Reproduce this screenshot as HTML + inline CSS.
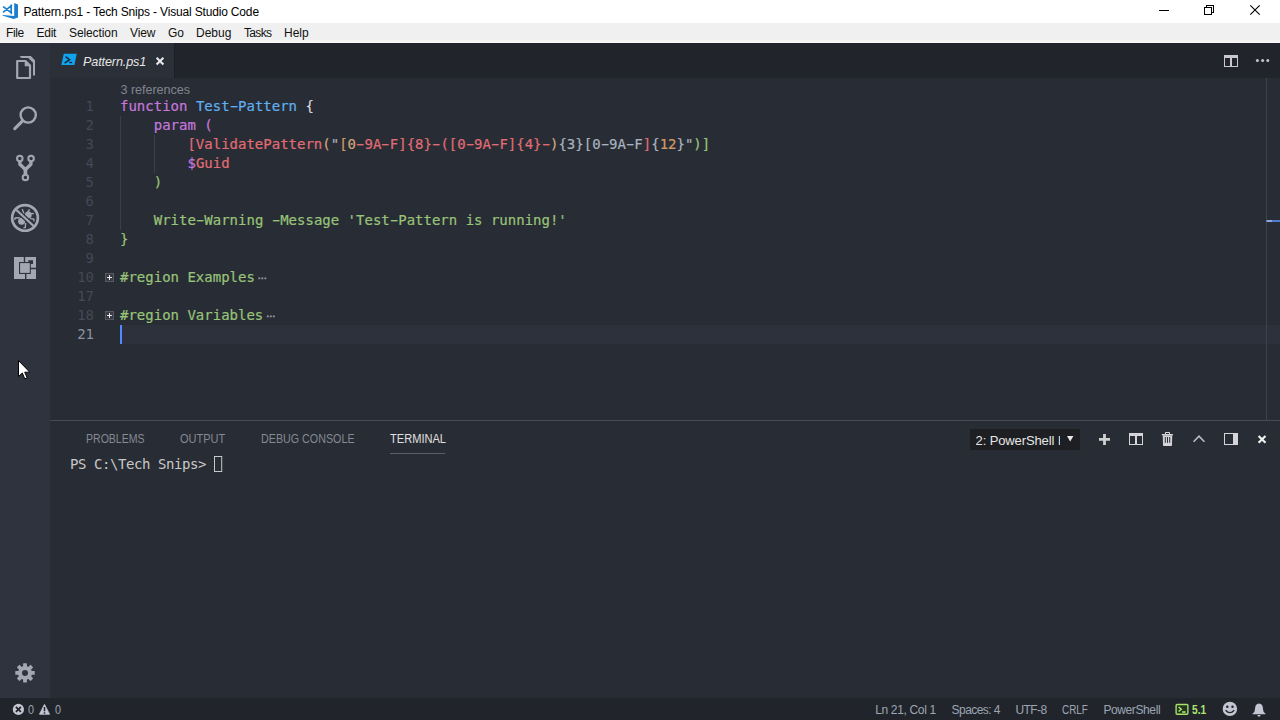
<!DOCTYPE html>
<html lang="en">
<head>
<meta charset="utf-8">
<title>Pattern.ps1 - Tech Snips - Visual Studio Code</title>
<style>
*{box-sizing:border-box;margin:0;padding:0}
html,body{width:1280px;height:720px;overflow:hidden;background:#282c34}
body{position:relative;font-family:"Liberation Sans",sans-serif;font-size:12px;color:#abb2bf}
.abs{position:absolute}
#titlebar{left:0;top:0;width:1280px;height:23px;background:#fff;color:#000}
#title{left:23.5px;top:0;height:23px;line-height:25px;font-size:12px;white-space:nowrap;letter-spacing:-0.17px}
#menubar{left:0;top:23px;width:1280px;height:20px;background:#f0f0f0;color:#111}
#menubar span{position:absolute;top:0;height:20px;line-height:21px;font-size:12px;white-space:nowrap}
#activity{left:0;top:43px;width:50px;height:655px;background:#2f333d}
#tabs{left:50px;top:43px;width:1230px;height:35px;background:#21252b}
#tab{left:0;top:0;width:125px;height:35px;background:#2b2f38;border-right:1px solid #1c1f25}
#tabname{left:33px;top:0;height:35px;line-height:38px;font-size:12.6px;letter-spacing:-0.12px;font-style:italic;color:#e6e6e6;white-space:nowrap}
#editor{left:50px;top:78px;width:1230px;height:342px;background:#282c34;overflow:hidden}
.ln{position:absolute;left:0;width:44px;text-align:right;height:19px;line-height:19px;font-family:"DejaVu Sans Mono","Liberation Mono",monospace;font-size:14px;color:#434956}
.cl{position:absolute;left:70px;height:19px;line-height:19px;font-family:"DejaVu Sans Mono","Liberation Mono",monospace;font-size:14px;white-space:pre;color:#abb2bf;-webkit-text-stroke:0.2px currentColor}
.p{color:#c678dd}.b{color:#61afef}.r{color:#e06c75}.g{color:#98c379}.o{color:#d19a66}.w{color:#abb2bf}.y{color:#d4d7dd}.t{color:#cfa77e}
.cur{color:#8b929f}
.el{display:inline-block;width:0;font-family:"DejaVu Sans",sans-serif;font-size:9px;color:#9a9ea8;-webkit-text-stroke:0.6px currentColor;position:relative;left:3px;top:-1px;letter-spacing:0}
.h{display:inline-block;font-style:normal;transform:scaleX(1.75)}
#lens{left:70.5px;top:2.5px;height:19px;line-height:19px;font-size:12.6px;letter-spacing:-0.05px;color:#80858f;white-space:nowrap}
.guide{position:absolute;width:1px;background:#3b4048}
#panel{left:50px;top:420px;width:1230px;height:278px;background:#282c34;border-top:1px solid #464a52}
.ptab{position:absolute;top:0;height:35px;line-height:36px;font-size:12.3px;color:#858a93;white-space:nowrap}
#term{left:20px;top:35px;height:17px;line-height:17px;font-family:"DejaVu Sans Mono","Liberation Mono",monospace;font-size:14px;letter-spacing:-0.43px;color:#c8c8c8;white-space:pre}
#status{left:0;top:698px;width:1280px;height:22px;background:#21252b;color:#9da5b4}
#status span{position:absolute;top:0;height:22px;line-height:25px;font-size:12px;white-space:nowrap}
svg{position:absolute;overflow:visible}
</style>
</head>
<body>
<div id="titlebar" class="abs">
  <div id="title" class="abs">Pattern.ps1 - Tech Snips - Visual Studio Code</div>
</div>
<div id="menubar" class="abs">
  <span id="m_file" style="left:6px;letter-spacing:-0.35px">File</span><span id="m_edit" style="left:37px;letter-spacing:-0.25px;margin-left:-0.5px">Edit</span><span id="m_selection" style="left:69px;letter-spacing:-0.1px">Selection</span><span id="m_view" style="left:130px;letter-spacing:-0.15px">View</span><span id="m_go" style="left:168px">Go</span><span id="m_debug" style="left:196px">Debug</span><span id="m_tasks" style="left:244px;letter-spacing:-0.68px">Tasks</span><span id="m_help" style="left:284px">Help</span>
</div>
<div class="abs" style="left:0;top:40px;width:1280px;height:2px;background:#f4f4f5"></div>
<div class="abs" style="left:0;top:42px;width:1280px;height:1px;background:#f9f9f9"></div>
<div id="activity" class="abs"></div>
<div id="tabs" class="abs">
  <div id="tab" class="abs"><div id="tabname" class="abs">Pattern.ps1</div></div>
</div>
<div id="editor" class="abs">
  <div id="lens" class="abs">3 references</div>
  <div id="lines">
  <div class="ln" style="top:19px">1</div><div class="cl" style="top:19px"><span class="p">function</span> <span class="b">Test<i class="h">-</i>Pattern</span> <span class="y">{</span></div>
  <div class="ln" style="top:38px">2</div><div class="cl" style="top:38px">    <span class="p">param (</span></div>
  <div class="ln" style="top:57px">3</div><div class="cl" style="top:57px">        <span class="r">[ValidatePattern</span><span class="t">(</span><span class="w">"</span><span class="o">[</span><span class="t">0</span><span class="r"><i class="h">-</i>9A<i class="h">-</i>F]{8}<i class="h">-</i>([0<i class="h">-</i>9A<i class="h">-</i>F]{4}<i class="h">-</i></span><span class="t">)</span><span class="w">{3}[0<i class="h">-</i>9A<i class="h">-</i>F</span><span class="r">]</span><span class="w">{</span><span class="o">12</span><span class="w">}"</span><span class="g">)]</span></div>
  <div class="ln" style="top:76px">4</div><div class="cl" style="top:76px">        <span class="p">$</span><span class="r">Guid</span></div>
  <div class="ln" style="top:95px">5</div><div class="cl" style="top:95px">    <span class="g">)</span></div>
  <div class="ln" style="top:114px">6</div>
  <div class="ln" style="top:133px">7</div><div class="cl" style="top:133px">    <span class="g">Write<i class="h">-</i>Warning <i class="h">-</i>Message 'Test<i class="h">-</i>Pattern is running!'</span></div>
  <div class="ln" style="top:152px">8</div><div class="cl" style="top:152px"><span class="g">}</span></div>
  <div class="ln" style="top:171px">9</div>
  <div class="ln" style="top:190px">10</div><div class="cl" style="top:190px"><span class="g">#region Examples</span><span class="el">⋯</span></div>
  <div class="ln" style="top:209px">17</div>
  <div class="ln" style="top:228px">18</div><div class="cl" style="top:228px"><span class="g">#region Variables</span><span class="el">⋯</span></div>
  <div class="ln cur" style="top:247px">21</div>
  </div>
</div>
<div id="panel" class="abs">
  <div class="ptab" id="p_problems" style="left:36px;margin-left:0.00px;transform:scaleX(0.857);transform-origin:0 0">PROBLEMS</div>
  <div class="ptab" id="p_output" style="left:130px;margin-left:0.10px;transform:scaleX(0.896);transform-origin:0 0">OUTPUT</div>
  <div class="ptab" id="p_debug" style="left:211px;margin-left:0.00px;transform:scaleX(0.872);transform-origin:0 0">DEBUG CONSOLE</div>
  <div class="ptab" id="p_terminal" style="left:340px;color:#e0e0e0;margin-left:0.00px;transform:scaleX(0.901);transform-origin:0 0">TERMINAL</div>
  <div id="term" class="abs">PS C:\Tech Snips&gt; </div>
</div>
<div id="status" class="abs">
  <span id="s_e" style="left:28.2px;transform:scaleX(0.9);transform-origin:0 0">0</span><span id="s_w" style="left:55px;transform:scaleX(0.9);transform-origin:0 0">0</span>
  <span id="s_ln" style="left:875px;letter-spacing:-0.34px;margin-left:0.20px">Ln 21, Col 1</span><span id="s_sp" style="left:951px;letter-spacing:-0.57px;margin-left:0.60px">Spaces: 4</span><span id="s_utf" style="left:1015px;letter-spacing:-0.55px;margin-left:0.40px">UTF-8</span><span id="s_crlf" style="left:1061.6px;transform:scaleX(0.825);transform-origin:0 0">CRLF</span><span id="s_ps" style="left:1103px;letter-spacing:-0.39px;margin-left:0.40px">PowerShell</span><span id="s_ver" style="left:1191.6px;color:#abe56e;font-weight:bold;transform:scaleX(0.85);transform-origin:0 0">5.1</span>
</div>

<div class="abs guide" style="left:120px;top:116px;height:114px"></div>
<div class="abs guide" style="left:154px;top:135px;height:38px"></div>
<div class="abs" id="linehl" style="left:120px;top:325px;width:1160px;height:19px;background:#2c313b"></div>
<div class="abs" id="caret" style="left:120px;top:325px;width:2px;height:19px;background:#528bff"></div>
<div class="abs" id="ruler" style="left:1266px;top:78px;width:1px;height:342px;background:#3e4249"></div>
<div class="abs" id="rmark" style="left:1266px;top:220px;width:14px;height:2px;background:#4f7bd2"></div>
<div class="abs" id="rmark2" style="left:1267px;top:220px;width:5px;height:2px;background:#8fa6d6"></div>
<div class="abs" id="termul" style="left:390px;top:453px;width:55px;height:1px;background:#5a5f6b"></div>
<div class="abs" id="dd" style="left:970px;top:429px;width:110px;height:21px;background:#1d1f23"></div>
<div class="abs" id="ddt" style="left:975.6px;top:429px;width:84.4px;height:21px;line-height:24px;font-size:13px;letter-spacing:-0.12px;color:#e6e6e6;white-space:nowrap;overflow:hidden">2: PowerShell I</div>

<svg id="ov" width="1280" height="720" viewBox="0 0 1280 720" style="left:0;top:0;pointer-events:none">
  <!-- vscode logo -->
  <g id="logo" fill="#1b7fd0" stroke="none">
    <path d="M14.2 3 L18 4.6 L18 17.4 L13.6 19 L2.2 15.6 L3 15 L14.2 16 Z"/>
    <path d="M3.6 6.9 L11.4 12.9 M3.6 11.9 L11.4 5.6 M11.2 5.2 L11.2 13.4" stroke="#1b7fd0" stroke-width="1.7" fill="none" stroke-linecap="round"/>
  </g>
  <!-- window controls -->
  <g stroke="#000" stroke-width="1" fill="none" shape-rendering="crispEdges">
    <path d="M1159 10.5 H1169"/>
    <path d="M1204.5 7.5 H1211.5 V14.5 H1204.5 Z"/>
    <path d="M1206.5 7.5 V5.5 H1213.5 V12.5 H1211.5"/>
  </g>
  <path d="M1250.3 5.3 L1259.7 14.7 M1259.7 5.3 L1250.3 14.7" stroke="#000" stroke-width="1.1" fill="none"/>

  <!-- activity bar icons -->
  <g id="act" stroke="#a4a7b1" fill="none">
    <!-- explorer -->
    <path d="M17.2 61 H25.5 L30 65.5 V78 H17.2 Z" stroke-width="2.2" stroke-linejoin="round"/>
    <path d="M25 61 V66 H30 Z" fill="#a4a7b1" stroke-width="0.6"/>
    <path d="M20.4 57.2 Q20.6 56.9 21.4 56.9 H30.4 L34 60.6 V75.6" stroke-width="2" stroke-linejoin="miter"/>
    <path d="M30 57 L34.4 61.4 L34.4 64 L28.5 58.2 Z" fill="#a4a7b1" stroke="none"/>
    <!-- search -->
    <circle cx="28.2" cy="115" r="7.6" stroke-width="2.4"/>
    <path d="M22.6 120.8 L14.8 128.6" stroke-width="3.2" stroke-linecap="round"/>
    <!-- git -->
    <circle cx="19.8" cy="158.5" r="2.75" stroke-width="2"/>
    <circle cx="31.1" cy="158.5" r="2.75" stroke-width="2"/>
    <circle cx="25.4" cy="177.6" r="2.75" stroke-width="2"/>
    <path d="M19.9 162 V164.2 L25.4 169.6 L30.9 164.2 V162" stroke-width="3.4" stroke-linejoin="round"/>
    <path d="M25.4 168.5 V174.4" stroke-width="3.7"/>
    <!-- debug -->
    <g stroke-width="1.4" stroke-linecap="round">
      <path d="M23.8 213.4 L22.4 209.6 M27.7 212.2 L29.2 209.8 M30.4 213.9 L33.2 213.5 M30.6 218.6 L33.8 219 L33.9 220.8 M19.2 217.7 L15.2 218 L14.8 219.4 M25.6 223.4 L25.3 227.4 L24 227.8"/>
    </g>
    <circle cx="28.3" cy="215" r="3.4" fill="#a4a7b1" stroke="none"/>
    <circle cx="21.6" cy="221.3" r="3.5" fill="#a4a7b1" stroke="none"/>
    <path d="M16.4 210 L33.6 226" stroke="#2f333d" stroke-width="4.6"/>
    <path d="M16.4 210 L33.6 226" stroke-width="2.3"/>
    <circle cx="25" cy="217.9" r="12.85" stroke-width="2.7"/>
  </g>
  <!-- extensions -->
  <g fill="#a4a7b1" stroke="none">
    <path d="M14 257 H23.8 V262 H19 V274 H25 V279 H14 Z"/>
    <path d="M25.2 257 H36 V267.8 H30.8 V264 H33 V260.2 H28.3 V262 H25.2 Z"/>
    <path d="M26.4 279 V274 H30.8 V269.2 H36 V279 Z"/>
    <rect x="20.1" y="263.1" width="9.7" height="9.8"/>
  </g>
  <!-- gear -->
  <g id="gear" transform="translate(25 672.9)">
    <g fill="#a4a7b1">
      <circle r="7"/>
      <rect x="-1.9" y="-9.7" width="3.8" height="19.4" rx="0.5"/>
      <rect x="-1.9" y="-9.7" width="3.8" height="19.4" rx="0.5" transform="rotate(45)"/>
      <rect x="-1.9" y="-9.7" width="3.8" height="19.4" rx="0.5" transform="rotate(90)"/>
      <rect x="-1.9" y="-9.7" width="3.8" height="19.4" rx="0.5" transform="rotate(135)"/>
    </g>
    <circle r="3" fill="#2f333d"/>
  </g>
  <!-- mouse cursor -->
  <path d="M18.5 360.5 V376.5 L22.3 373 L24.8 378.8 L27.2 377.8 L24.7 372.2 H29.8 Z" fill="#fff" stroke="#000" stroke-width="1" stroke-linejoin="miter"/>

  <!-- tab: powershell icon -->
  <path d="M63.8 53.8 H76.8 L74.4 65 H61.3 Z" fill="#12a3ee"/>
  <path d="M65.6 56.6 L69.6 59.7 L64.6 63.2" stroke="#17283c" stroke-width="1.5" fill="none"/>
  <path d="M69.2 62.5 H72.2" stroke="#17283c" stroke-width="1.3" fill="none"/>
  <!-- tab close -->
  <path d="M156.6 57.7 L163.4 64.5 M163.4 57.7 L156.6 64.5" stroke="#e8e8ee" stroke-width="2.1" fill="none"/>
  <!-- editor actions -->
  <g fill="#c8c8ce">
    <path fill-rule="evenodd" d="M1224 55 H1238 V67 H1224 Z M1225 58 V66 H1230 V58 Z M1232 58 V66 H1237 V58 Z"/>
  </g>
  <g fill="#c5c5c5"><circle cx="1257.4" cy="60.6" r="1.5"/><circle cx="1262.6" cy="60.6" r="1.5"/><circle cx="1267.8" cy="60.6" r="1.5"/></g>

  <!-- fold markers -->
  <g id="folds" shape-rendering="crispEdges">
    <rect x="105.5" y="273.5" width="8" height="8" fill="#383b44" stroke="#565961"/>
    <path d="M107 277.5 H112 M109.5 275 V280" stroke="#ececec" stroke-width="1"/>
    <rect x="105.5" y="311.5" width="8" height="8" fill="#383b44" stroke="#565961"/>
    <path d="M107 315.5 H112 M109.5 313 V318" stroke="#ececec" stroke-width="1"/>
  </g>
  

  <!-- panel actions -->
  <path d="M1099 439.4 H1110 M1104.5 434 V445" stroke="#d0d0d0" stroke-width="2.8" fill="none"/>
  <g fill="#d4d4da">
    <path fill-rule="evenodd" d="M1129 433 H1143 V445 H1129 Z M1130 436 V444 H1135 V436 Z M1137 436 V444 H1142 V436 Z"/>
    <path fill-rule="evenodd" d="M1224 433 H1238 V445 H1224 Z M1225 434 V444 H1233 V434 Z"/>
  </g>
    <!-- trash -->
  <g fill="#d4d4da">
    <rect x="1161.8" y="434" width="11.2" height="1.6" rx="0.5"/>
    <path fill-rule="evenodd" d="M1165 434.2 V432.6 Q1165 432 1165.6 432 H1169.4 Q1170 432 1170 432.6 V434.2 Z M1166 433 V434.2 H1169 V433 Z"/>
    <path d="M1162.8 435.4 H1172.2 L1172 445.2 Q1172 446 1171.2 446 H1163.8 Q1163 446 1163 445.2 Z"/>
  </g>
  <g fill="#282c34"><rect x="1164.8" y="437" width="1" height="5.8"/><rect x="1167" y="437" width="1" height="5.8"/><rect x="1169.2" y="437" width="1" height="5.8"/></g>
  <!-- chevron -->
  <path d="M1193.6 441.8 L1199 436.2 L1204.4 441.8" stroke="#bcbcc2" stroke-width="1.6" fill="none"/>
  <!-- close -->
  <path d="M1258.6 436 L1265.5 442.8 M1265.5 436 L1258.6 442.8" stroke="#f0f0f0" stroke-width="2.2" fill="none"/>
  <!-- dropdown arrow -->
  <path d="M1067 436 H1073.4 L1070.2 441.6 Z" fill="#e8e8e8"/>
  <!-- terminal cursor -->
  <rect x="214.5" y="456.5" width="7.2" height="15" fill="none" stroke="#c8c8c8" stroke-width="1"/>

  <!-- status bar icons -->
  <circle cx="18.4" cy="709.4" r="5.6" fill="#c3c6d1"/>
  <path d="M15.9 706.9 L20.9 711.9 M20.9 706.9 L15.9 711.9" stroke="#21252b" stroke-width="1.8" fill="none"/>
  <path d="M44.5 704.4 L49.5 714.2 H39.5 Z" fill="#c3c6d1" stroke="#c3c6d1" stroke-width="0.9" stroke-linejoin="round"/>
  <path d="M44.5 707 V711.3 M44.5 712.3 V713.7" stroke="#21252b" stroke-width="1.5" fill="none"/>
  <!-- ps version icon -->
  <rect x="1176.1" y="704.5" width="11.8" height="9.8" rx="1" fill="#23361f" stroke="#a6e06a" stroke-width="1.4"/>
  <path d="M1178.6 707 L1181.4 709.3 L1178.6 711.6 M1182.2 712 H1185.6" stroke="#b8ec80" stroke-width="1.3" fill="none"/>
  <!-- smiley -->
  <circle cx="1229.9" cy="708.9" r="7.2" fill="#c3c6d1"/>
  <circle cx="1227.3" cy="706.7" r="1.25" fill="#21252b"/><circle cx="1232.5" cy="706.7" r="1.25" fill="#21252b"/>
  <path d="M1225.6 710.2 Q1229.9 715 1234.2 710.2" stroke="#21252b" stroke-width="1.4" fill="none"/>
  <!-- bell -->
  <path d="M1259 703.6 Q1263 704 1263 709 Q1263 712.4 1265.4 713.4 V714.2 H1252.6 V713.4 Q1255 712.4 1255 709 Q1255 704 1259 703.6 Z" fill="#c3c6d1"/>
  <path d="M1257.4 715 H1260.6 Q1260.4 716.8 1259 716.8 Q1257.6 716.8 1257.4 715 Z" fill="#c3c6d1"/>
</svg>
</body>
</html>
